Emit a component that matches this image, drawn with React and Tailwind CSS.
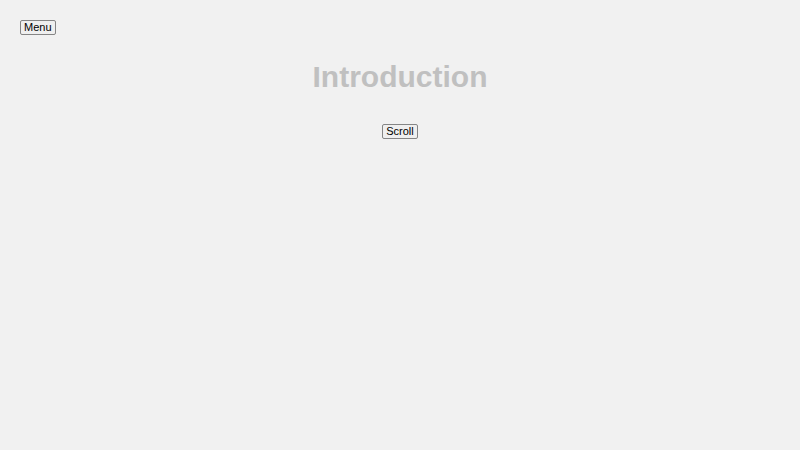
import React from 'react'

const btn = "flex items-center px-[3px] py-0 h-[15px] border border-[#858585] rounded-[2px] bg-[#efefef] text-[11px] leading-[13px] text-black"

const App = () => {
  return (
    <div className="min-h-screen w-full bg-[#f1f1f1] font-['Liberation_Sans',Arial,sans-serif]">
      <div className="flex pt-[20px] pl-[20px]">
        <button className={btn}>Menu</button>
      </div>
      <div className="flex flex-col items-center">
        <h1 className="mt-[24px] text-[30px] leading-[36px] font-bold text-[#c0c0c0]">Introduction</h1>
        <button className={`${btn} mt-[29px]`}>Scroll</button>
      </div>
    </div>
  )
}

export default App
